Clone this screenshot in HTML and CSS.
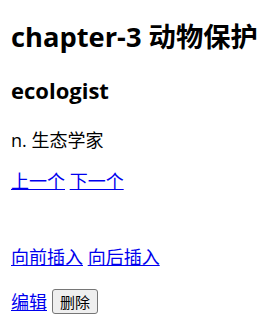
FILE: index.html
```html
<!DOCTYPE html>
<html lang="zh-CN">
<head>
    <meta charset="UTF-8">
    <meta name="viewport" content="width=device-width, initial-scale=1.0">
    <title>chapter-3 动物保护</title>
    <link rel="stylesheet" href="styles.css">
</head>
<body>
    <h1 class="chapter">chapter-3 动物保护</h1>
    <h2 class="word">ecologist</h2>
    <p class="meaning">n. 生态学家</p>
    <p class="nav">
        <a href="#">上一个</a> <a href="#">下一个</a>
    </p>
    <p class="insert">
        <a href="#">向前插入</a> <a href="#">向后插入</a>
    </p>
    <p class="actions">
        <a href="#">编辑</a> <button class="delete">删除</button>
    </p>
</body>
</html>
```

FILE: styles.css
```css
body {
    margin: 0;
    padding: 12px 11px;
    font-family: "Open Sans", "Noto Sans CJK SC", sans-serif;
    font-size: 18px;
    line-height: 24px;
    color: #000;
    background-color: #fff;
}
a {
    color: #0000ee;
}
.chapter {
    font-size: 27.3px;
    line-height: 34px;
    margin: 8px 0 0;
}
.word {
    font-size: 22px;
    line-height: 30px;
    margin: 21px 0 0;
}
.meaning {
    margin: 23px 0 0;
}
.nav {
    margin: 17px 0 0;
}
.insert {
    margin: 52px 0 0;
}
.actions {
    margin: 20px 0 0;
    display: flex;
    align-items: center;
    gap: 5px;
}
.delete {
    font-family: "Noto Sans CJK SC", sans-serif;
    font-size: 15px;
    line-height: 21px;
    padding: 1px 7px;
    background-color: #efefef;
    border: 1px solid #767676;
    border-radius: 3px;
    color: #000;
}
```
